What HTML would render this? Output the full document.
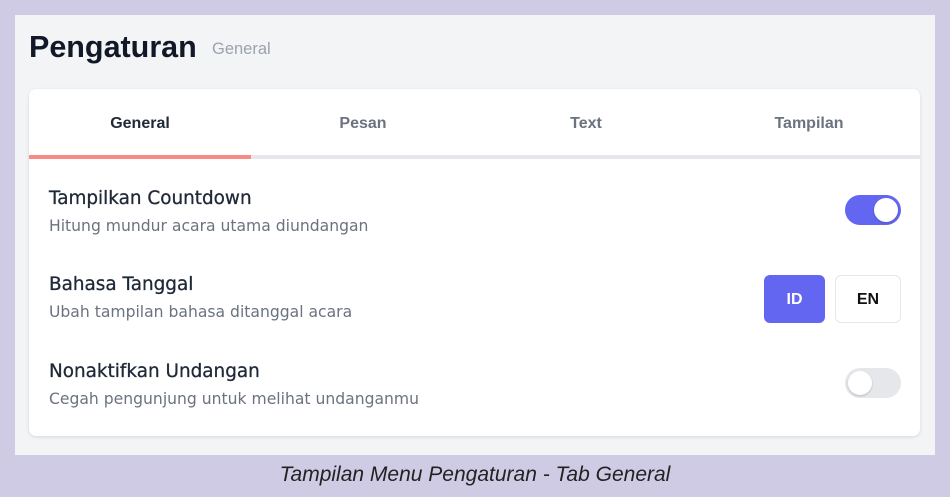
<!DOCTYPE html>
<html><head><style>
*{margin:0;padding:0;box-sizing:border-box}
body{width:950px;height:497px;background:#d0cbe4;font-family:"Liberation Sans",sans-serif;position:relative;overflow:hidden}
.panel{position:absolute;left:15px;top:15px;width:920px;height:440px;background:#f3f4f6}
.h1{position:absolute;left:29px;top:30px;font-size:30.5px;font-weight:bold;color:#111827}
.sub{position:absolute;left:212px;top:40px;font-size:16.5px;color:#9ca3af}
.card{position:absolute;left:29px;top:89px;width:891px;height:347px;background:#fff;border-radius:7px;box-shadow:0 1px 3px rgba(0,0,0,.12)}
.tabs{position:absolute;left:0;top:0;width:891px;height:70px;border-bottom:4px solid #e5e7eb}
.tab{position:absolute;top:26px;width:222px;text-align:center;font-size:16px;font-weight:bold;color:#6b7280}
.act{position:absolute;left:0;top:66px;width:222px;height:4px;background:#fa8a84}
.t{position:absolute;left:20px;font-family:"DejaVu Sans",sans-serif;font-size:18.4px;color:#1f2937;-webkit-text-stroke:0.3px #1f2937}
.d{position:absolute;left:20px;font-family:"DejaVu Sans",sans-serif;font-size:15.6px;color:#6b7280}
.tg{position:absolute;left:816px;width:56px;height:30px;border-radius:15px}
.knob{position:absolute;top:3px;width:24px;height:24px;border-radius:50%;background:#fff;box-shadow:0 1px 2px rgba(0,0,0,.2)}
.btn{position:absolute;top:186px;height:48px;border-radius:6px;font-size:16px;font-weight:bold;text-align:center;line-height:50px}
.cap{position:absolute;left:0;width:950px;top:463px;text-align:center;font-style:italic;font-size:21px;color:#222}
</style></head><body>
<div class="panel"></div>
<div class="h1">Pengaturan</div>
<div class="sub">General</div>
<div class="card">
<div class="tabs">
<div class="tab" style="left:0;color:#1f2937">General</div>
<div class="tab" style="left:223px">Pesan</div>
<div class="tab" style="left:446px">Text</div>
<div class="tab" style="left:669px">Tampilan</div>
<div class="act"></div>
</div>
<div class="t" style="top:99px">Tampilkan Countdown</div>
<div class="d" style="top:128px">Hitung mundur acara utama diundangan</div>
<div class="tg" style="top:106px;background:#6366f1"><div class="knob" style="left:29px"></div></div>
<div class="t" style="top:185px">Bahasa Tanggal</div>
<div class="d" style="top:214px">Ubah tampilan bahasa ditanggal acara</div>
<div class="btn" style="left:735px;width:61px;background:#6366f1;color:#fff">ID</div>
<div class="btn" style="left:806px;width:66px;border:1px solid #e5e7eb;color:#111;line-height:48px">EN</div>
<div class="t" style="top:272px">Nonaktifkan Undangan</div>
<div class="d" style="top:301px">Cegah pengunjung untuk melihat undanganmu</div>
<div class="tg" style="top:279px;background:#e5e7eb"><div class="knob" style="left:3px"></div></div>
</div>
<div class="cap">Tampilan Menu Pengaturan - Tab General</div>
</body></html>
